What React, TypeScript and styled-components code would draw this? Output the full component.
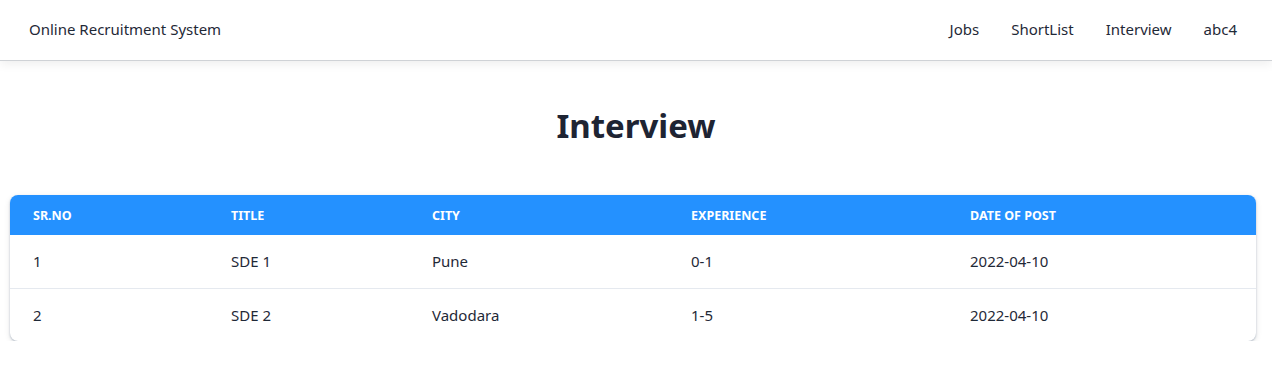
import React from "react";
import styled, { createGlobalStyle } from "styled-components";

const Global = createGlobalStyle`
  body { margin: 0; background: #fff; font-family: "Noto Sans", "Open Sans", sans-serif; color: #1f2937; }
`;

const NavBar = styled.nav`
  height: 61px;
  box-sizing: border-box;
  display: flex;
  align-items: center;
  justify-content: space-between;
  padding: 0 35px 3px 29px;
  border-bottom: 1px solid #cfd2d6;
  box-shadow: 0 3px 10px rgba(0,0,0,0.07);
  font-size: 15px;
`;

const Brand = styled.div`
  color: #1f2937;
`;

const Links = styled.div`
  display: flex;
  gap: 32px;
`;

const NavLink = styled.a`
  color: #1f2937;
  text-decoration: none;
`;

const Title = styled.h1`
  margin: 41px 0 0;
  text-align: center;
  font-size: 33px;
  font-weight: 700;
  line-height: 48px;
  color: #1e2433;
`;

const Card = styled.div`
  margin: 45px 16px 0 10px;
  border-radius: 8px;
  overflow: hidden;
  box-shadow: 0 1px 2px rgba(60, 85, 120, 0.35), 0 2px 6px rgba(0, 0, 0, 0.1);
`;

const Table = styled.table`
  width: 100%;
  border-collapse: collapse;
  table-layout: fixed;
`;

const HeadCell = styled.th<{ $w: number }>`
  box-sizing: border-box;
  width: ${(p) => p.$w}px;
  background: #2491ff;
  color: #fff;
  text-align: left;
  font-size: 12.5px;
  font-weight: 700;
  text-transform: uppercase;
  height: 40px;
  padding: 0 0 0 23px;
`;

const Row = styled.tr<{ $last?: boolean }>`
  border-bottom: ${(p) => (p.$last ? "none" : "1px solid #e5e9ef")};
`;

const Cell = styled.td`
  box-sizing: border-box;
  height: 53px;
  padding: 0 0 0 23px;
  font-size: 15px;
  color: #1f2937;
`;

const cols = [
  { h: "Sr.No", w: 198 },
  { h: "Title", w: 201 },
  { h: "City", w: 259 },
  { h: "Experience", w: 279 },
  { h: "Date of Post", w: 309 },
];

const rows = [
  ["1", "SDE 1", "Pune", "0-1", "2022-04-10"],
  ["2", "SDE 2", "Vadodara", "1-5", "2022-04-10"],
];

export default function App() {
  return (
    <>
      <Global />
      <NavBar>
        <Brand>Online Recruitment System</Brand>
        <Links>
          <NavLink>Jobs</NavLink>
          <NavLink>ShortList</NavLink>
          <NavLink>Interview</NavLink>
          <NavLink>abc4</NavLink>
        </Links>
      </NavBar>
      <Title>Interview</Title>
      <Card>
        <Table>
          <thead>
            <tr>
              {cols.map((c) => (
                <HeadCell key={c.h} $w={c.w}>{c.h}</HeadCell>
              ))}
            </tr>
          </thead>
          <tbody>
            {rows.map((r, i) => (
              <Row key={i} $last={i === rows.length - 1}>
                {r.map((v, j) => (
                  <Cell key={j}>{v}</Cell>
                ))}
              </Row>
            ))}
          </tbody>
        </Table>
      </Card>
    </>
  );
}
